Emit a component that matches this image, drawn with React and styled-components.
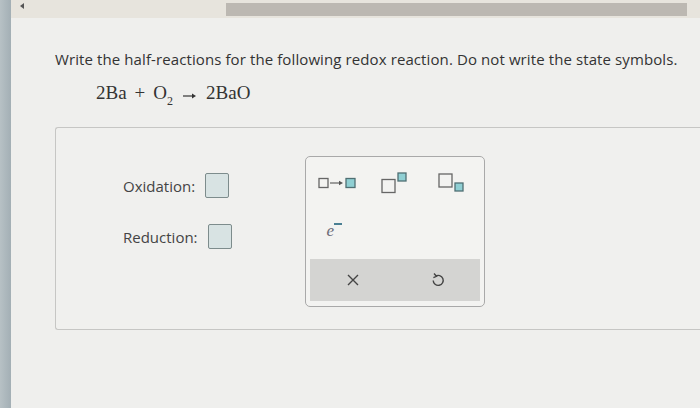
import React from "react";
import styled, { createGlobalStyle } from "styled-components";

const Global = createGlobalStyle`
  html, body {
    margin: 0;
    padding: 0;
    width: 700px;
    height: 408px;
    overflow: hidden;
    background: #eeeeec;
  }
`;

const Screen = styled.div`
  width: 700px;
  height: 408px;
  display: flex;
  background: #efefed;
  font-family: "Open Sans", "DejaVu Sans", sans-serif;
`;

const Edge = styled.div`
  width: 11px;
  flex-shrink: 0;
  background: linear-gradient(90deg, #b7c1c5, #a3afb5);
`;

const Page = styled.div`
  flex: 1;
  display: flex;
  flex-direction: column;
`;

const TopBar = styled.div`
  height: 18px;
  display: flex;
  align-items: center;
  background: #e7e4dd;
  padding-left: 9px;
`;

const Back = styled.div`
  width: 0;
  height: 0;
  border-top: 3px solid transparent;
  border-bottom: 3px solid transparent;
  border-right: 4px solid #555;
  margin-top: -7px;
`;

const Progress = styled.div`
  margin-left: 202px;
  width: 461px;
  height: 13px;
  background: #bcb8b2;
`;

const Content = styled.div`
  padding: 31px 0 0 44px;
`;

const Question = styled.p`
  margin: 0;
  font-size: 15px;
  line-height: 20px;
  letter-spacing: 0.1px;
  color: #333;
`;

const Equation = styled.div`
  margin: 13px 0 0 41px;
  font-family: "Liberation Serif", "DejaVu Serif", serif;
  font-size: 19px;
  line-height: 21px;
  color: #333;
  display: flex;
  align-items: baseline;
  gap: 8px;
`;

const Sub = styled.sub`
  font-size: 12px;
  line-height: 0;
  vertical-align: -6px;
`;

const Arrow = styled.span`
  display: inline-flex;
  align-items: center;
  margin: 0 2px;
`;

const AnswerPanel = styled.div`
  margin-top: 24px;
  height: 201px;
  border: 1px solid #c6c6c4;
  border-right: none;
  border-radius: 3px 0 0 3px;
  background: #f0f0ee;
  display: flex;
  align-items: flex-start;
`;

const Fields = styled.div`
  width: 120px;
  margin: 45px 0 0 67px;
  display: flex;
  flex-direction: column;
  gap: 26px;
`;

const FieldRow = styled.div`
  display: flex;
  align-items: center;
  gap: 10px;
`;

const Label = styled.span`
  font-size: 15px;
  color: #444;
`;

const InputBox = styled.div`
  width: 24px;
  height: 25px;
  box-sizing: border-box;
  flex-shrink: 0;
  border: 1.5px solid #7d8c8c;
  border-radius: 2px;
  background: #d8e3e3;
`;

const Palette = styled.div`
  margin: 28px 0 0 62px;
  width: 180px;
  height: 151px;
  border: 1.5px solid #a9a9a9;
  border-radius: 5px;
  background: #f3f3f1;
  display: flex;
  flex-direction: column;
  padding: 2px 4px 5px;
  box-sizing: border-box;
`;

const ToolGrid = styled.div`
  display: grid;
  grid-template-columns: repeat(3, 1fr);
  grid-auto-rows: 48px;
  height: 98px;
`;

const Tool = styled.div`
  display: flex;
  align-items: center;
  justify-content: center;
  color: #555;
`;

const Electron = styled.span`
  font-family: "Liberation Serif", "DejaVu Serif", serif;
  font-style: italic;
  font-size: 17px;
  color: #6a6a78;
  position: relative;
  margin-right: 16px;
  margin-top: 0;
  &::after {
    content: "";
    position: absolute;
    left: 7px;
    top: 2px;
    width: 8px;
    height: 2px;
    background: #4a7f93;
  }
`;

const ActionBar = styled.div`
  margin-top: 2px;
  flex: 1;
  background: #d4d4d2;
  display: grid;
  grid-template-columns: 1fr 1fr;
  align-items: center;
  justify-items: center;
`;

const Sq = ({ x, y, s, fill }) => (
  <rect x={x} y={y} width={s} height={s} fill={fill || "none"} stroke={fill ? "#4f6f73" : "#666"} strokeWidth="1.3" />
);

const App = () => (
  <>
    <Global />
    <Screen>
      <Edge />
      <Page>
        <TopBar>
          <Back />
          <Progress />
        </TopBar>
        <Content>
          <Question>
            Write the half-reactions for the following redox reaction. Do not write the state symbols.
          </Question>
          <Equation>
            <span>2Ba</span>
            <span>+</span>
            <span>
              O<Sub>2</Sub>
            </span>
            <Arrow>
              <svg width="13" height="6" viewBox="0 0 13 6">
                <path d="M0 3H10" stroke="#333" strokeWidth="1.2" />
                <path d="M9 0.5L13 3L9 5.5Z" fill="#333" />
              </svg>
            </Arrow>
            <span>2BaO</span>
          </Equation>
          <AnswerPanel>
            <Fields>
              <FieldRow>
                <Label>Oxidation:</Label>
                <InputBox />
              </FieldRow>
              <FieldRow>
                <Label>Reduction:</Label>
                <InputBox />
              </FieldRow>
            </Fields>
            <Palette>
              <ToolGrid>
                <Tool>
                  <svg width="40" height="14" viewBox="0 0 40 14">
                    <Sq x={1} y={2.5} s={9} />
                    <path d="M12 7H22" stroke="#555" strokeWidth="1.1" />
                    <path d="M21 4.8L25 7L21 9.2Z" fill="#555" />
                    <Sq x={28} y={2.5} s={9} fill="#8fcfd3" />
                  </svg>
                </Tool>
                <Tool>
                  <svg width="28" height="22" viewBox="0 0 28 22">
                    <Sq x={1} y={7.5} s={13} />
                    <Sq x={17} y={1} s={8} fill="#8fcfd3" />
                  </svg>
                </Tool>
                <Tool>
                  <svg width="28" height="22" viewBox="0 0 28 22">
                    <Sq x={1} y={2} s={13} />
                    <Sq x={17} y={11} s={8} fill="#8fcfd3" />
                  </svg>
                </Tool>
                <Tool>
                  <Electron>e</Electron>
                </Tool>
              </ToolGrid>
              <ActionBar>
                <svg width="14" height="14" viewBox="0 0 14 14">
                  <path d="M2 2L12 12M12 2L2 12" stroke="#444" strokeWidth="1.4" />
                </svg>
                <svg width="14" height="16" viewBox="0 0 14 16">
                  <path
                    d="M4.5 4.2A5 5 0 1 1 2.2 8.5"
                    fill="none"
                    stroke="#444"
                    strokeWidth="1.4"
                  />
                  <path d="M3 1.5L5.5 4.3L2.4 5.6" fill="none" stroke="#444" strokeWidth="1.4" />
                </svg>
              </ActionBar>
            </Palette>
          </AnswerPanel>
        </Content>
      </Page>
    </Screen>
  </>
);

export default App;
